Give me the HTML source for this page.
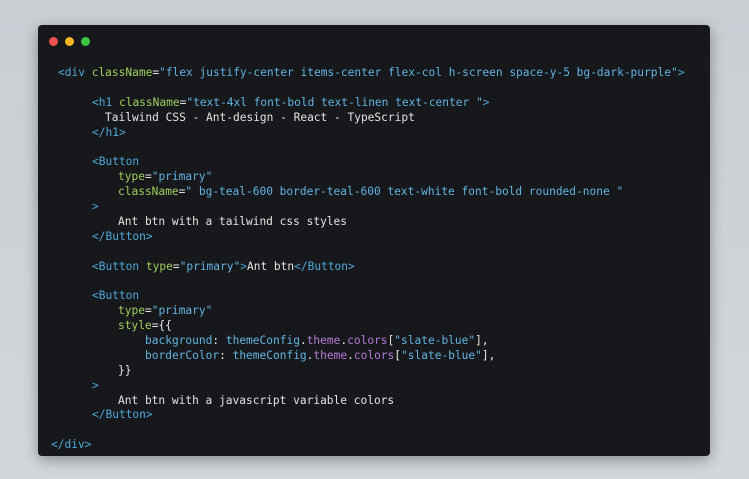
<!DOCTYPE html>
<html><head><style>
body{margin:0;width:749px;height:479px;background:linear-gradient(#c9ced3,#d3d7db);position:relative;overflow:hidden}
.win{position:absolute;left:38px;top:25px;width:672px;height:431px;background:#16181c;border-radius:4px;box-shadow:0 4px 14px rgba(0,0,0,.35)}
.d{position:absolute;top:12px;width:9px;height:9px;border-radius:50%}
.code{position:absolute;left:0;top:41px;margin:0;font:11.2px/14.9px "DejaVu Sans Mono","Liberation Mono",monospace;color:#e3e3e3}
.l{height:14.9px;white-space:pre}
.t{color:#4fa8d8}.a{color:#9fcf5c}.s{color:#63b4e0}.p{color:#b779d6}
</style></head><body>
<div class="win">
<div class="d" style="left:11px;background:#f0524f"></div>
<div class="d" style="left:27px;background:#f3b625"></div>
<div class="d" style="left:43px;background:#3cc544"></div>
<div class="code"><div class="l" style="padding-left:20px"><span class="t">&lt;div</span> <span class="a">className</span>=<span class="s">"flex justify-center items-center flex-col h-screen space-y-5 bg-dark-purple"</span><span class="t">&gt;</span></div><div class="l"></div><div class="l" style="padding-left:54px"><span class="t">&lt;h1</span> <span class="a">className</span>=<span class="s">"text-4xl font-bold text-linen text-center "</span><span class="t">&gt;</span></div><div class="l" style="padding-left:67px">Tailwind CSS - Ant-design - React - TypeScript</div><div class="l" style="padding-left:54px"><span class="t">&lt;/h1&gt;</span></div><div class="l"></div><div class="l" style="padding-left:54px"><span class="t">&lt;Button</span></div><div class="l" style="padding-left:80px"><span class="a">type</span>=<span class="s">"primary"</span></div><div class="l" style="padding-left:80px"><span class="a">className</span>=<span class="s">" bg-teal-600 border-teal-600 text-white font-bold rounded-none "</span></div><div class="l" style="padding-left:54px"><span class="t">&gt;</span></div><div class="l" style="padding-left:80px">Ant btn with a tailwind css styles</div><div class="l" style="padding-left:54px"><span class="t">&lt;/Button&gt;</span></div><div class="l"></div><div class="l" style="padding-left:54px"><span class="t">&lt;Button</span> <span class="a">type</span>=<span class="s">"primary"</span><span class="t">&gt;</span>Ant btn<span class="t">&lt;/Button&gt;</span></div><div class="l"></div><div class="l" style="padding-left:54px"><span class="t">&lt;Button</span></div><div class="l" style="padding-left:80px"><span class="a">type</span>=<span class="s">"primary"</span></div><div class="l" style="padding-left:80px"><span class="a">style</span>={{</div><div class="l" style="padding-left:107px"><span class="s">background</span>: <span class="s">themeConfig</span>.<span class="p">theme</span>.<span class="p">colors</span>[<span class="s">"slate-blue"</span>],</div><div class="l" style="padding-left:107px"><span class="s">borderColor</span>: <span class="s">themeConfig</span>.<span class="p">theme</span>.<span class="p">colors</span>[<span class="s">"slate-blue"</span>],</div><div class="l" style="padding-left:80px">}}</div><div class="l" style="padding-left:54px"><span class="t">&gt;</span></div><div class="l" style="padding-left:80px">Ant btn with a javascript variable colors</div><div class="l" style="padding-left:54px"><span class="t">&lt;/Button&gt;</span></div><div class="l"></div><div class="l" style="padding-left:13px"><span class="t">&lt;/div&gt;</span></div></div>
</div>
</body></html>
